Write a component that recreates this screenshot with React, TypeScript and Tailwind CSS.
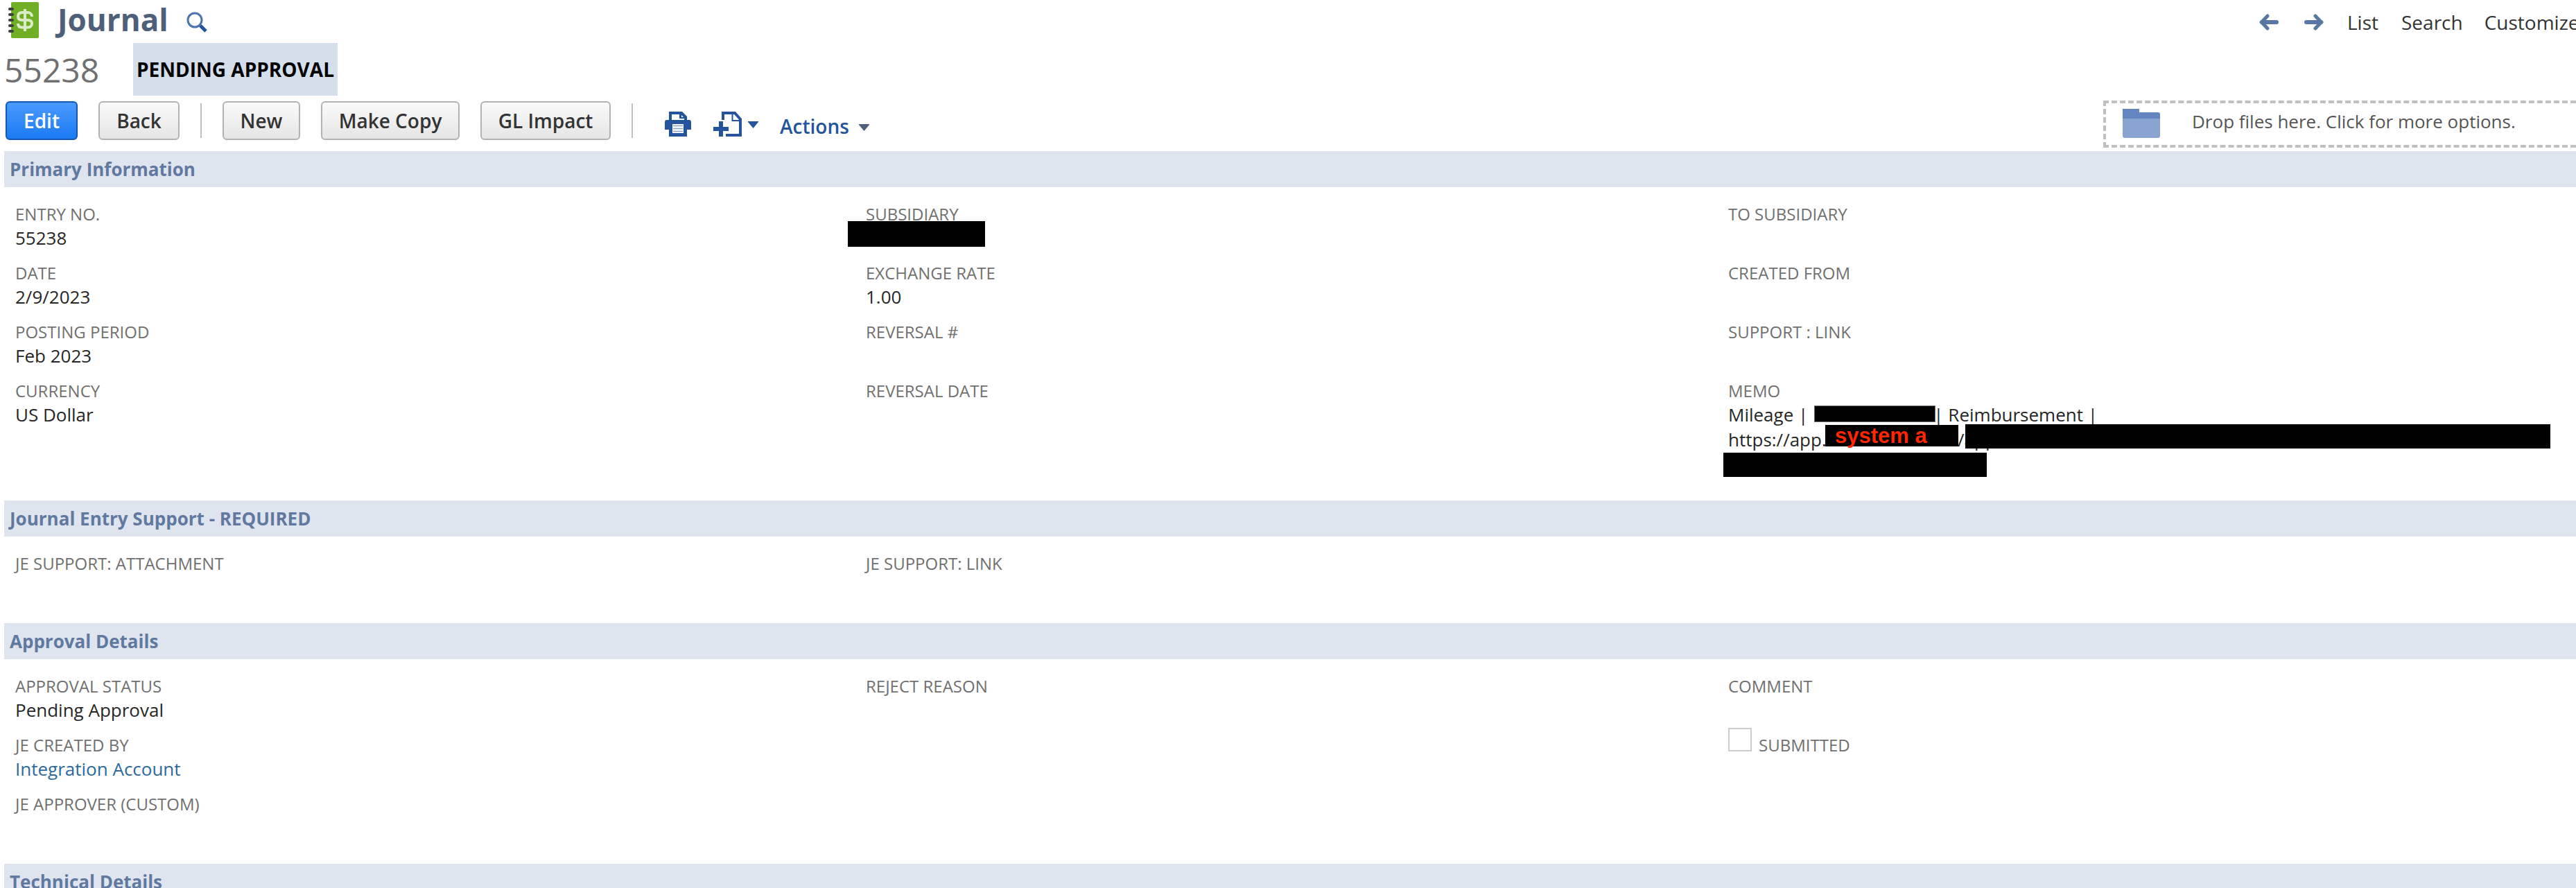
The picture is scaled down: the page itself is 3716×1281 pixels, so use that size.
import type { ReactNode } from "react";

function JournalIcon() {
  return (
    <svg className="h-[52px] w-[44px]" viewBox="0 0 44 52">
      <rect x="4" y="0" width="40" height="52" rx="2" fill="#6fae25" />
      {[10, 18, 26, 34, 42].map((y) => (
        <rect key={y} x="0" y={y - 2} width="8" height="4" rx="2" fill="#3f3f3f" />
      ))}
      <path d="M34 21c0-4-3-6-6-6h-8c-4 0-6 2-6 5.500s2 5.500 6 5.500h8c4 0 6 2 6 5s-2 5.500-6 5.500h-8c-4 0-6-2-6-5.500M24 10v32" fill="none" stroke="#dcecc8" strokeWidth="4" />
    </svg>
  );
}

function SearchIcon() {
  return (
    <svg className="h-[30px] w-[30px]" viewBox="0 0 30 30" fill="none">
      <circle cx="12" cy="12" r="10" stroke="#4a73b0" strokeWidth="3" />
      <path d="M20 20l8 8" stroke="#24549c" strokeWidth="5" />
    </svg>
  );
}

function PrintIcon() {
  return (
    <svg className="h-[36px] w-[38px]" viewBox="0 0 38 36">
      <path d="M6 13V0h19l7 7v6z" fill="#24549c" />
      <path d="M10 12V4h11v6h7v2z" fill="#fff" />
      <path d="M24 5v3h3z" fill="#fff" />
      <path d="M3 12h32q3 0 3 3v11h-6v10H6V26H0V15q0-3 3-3z" fill="#24549c" />
      <path d="M11 18h16v13H11z" fill="#fff" />
      <path d="M12 20.500h14M12 24.500h14M12 28.500h14" stroke="#86a0cb" strokeWidth="1.500" />
    </svg>
  );
}

function AddDocIcon() {
  return (
    <svg className="h-[36px] w-[41px]" viewBox="0 0 41 36" fill="none">
      <path d="M14 12V2h17l8 9v23H18" stroke="#24549c" strokeWidth="4" />
      <path d="M27.500 3v10H38" stroke="#24549c" strokeWidth="2" />
      <path d="M0 25h22M11 14v22" stroke="#24549c" strokeWidth="6" />
    </svg>
  );
}

function Caret({ className }: { className: string }) {
  return (
    <svg className={className} viewBox="0 0 15 10" fill="currentColor">
      <path d="M0 0h15v1L7.500 10 0 1z" />
    </svg>
  );
}

function Arrow({ flip }: { flip?: boolean }) {
  return (
    <svg className={flip ? "h-[26px] w-[30px] -scale-x-100" : "h-[26px] w-[30px]"} viewBox="0 0 30 26" fill="none" stroke="#5878a4">
      <path d="M5 13h21" strokeWidth="6" strokeLinecap="round" />
      <path d="M13 4L4.500 13l8.500 9" strokeWidth="5" strokeLinecap="round" />
    </svg>
  );
}

function FolderIcon() {
  return (
    <svg className="h-[42px] w-[54px]" viewBox="0 0 54 42">
      <path d="M0 0h24v5h27q3 0 3 3v10H0z" fill="#6385c0" />
      <path d="M0 14h54v25q0 3-3 3H3q-3 0-3-3z" fill="#8aa4d1" />
    </svg>
  );
}

function Section({ title, children }: { title: string; children?: ReactNode }) {
  return (
    <section>
      <h2 className="ml-[6px] h-[52px] bg-[#dfe5ef] pl-[8px] text-[26px] font-bold leading-[53px] text-[#61799f]">{title}</h2>
      {children && <div className="grid grid-cols-[1227px_1244px_1fr] pb-[34px] pl-[22px] pt-[23px]">{children}</div>}
    </section>
  );
}

function Column({ children }: { children: ReactNode }) {
  return <div className="flex flex-col gap-[17px]">{children}</div>;
}

function Field({ label, children }: { label: string; children?: ReactNode }) {
  return (
    <div className="min-h-[68px]">
      <div className="text-[24px] leading-[32px] text-[#707070]">{label}</div>
      <div className="text-[26px] leading-[36px] text-[#262626]">{children}</div>
    </div>
  );
}

function App() {
  return (
    <div className="h-[1281px] w-[3716px] overflow-hidden bg-white font-['Open_Sans',sans-serif] whitespace-nowrap">
      <header className="flex h-[62px] justify-between">
        <div className="flex pl-[12px] pt-[3px]">
          <JournalIcon />
          <h1 className="ml-[27px] -mt-[3px] text-[44px] font-bold leading-[57px] text-[#4d5f79]">Journal</h1>
          <div className="ml-[26px] mt-[14px]"><SearchIcon /></div>
        </div>
        <nav className="flex w-[458px] shrink-0 items-start pt-[13px] text-[28px] leading-[38px] text-[#333333]">
          <div className="mt-[6px] flex gap-[35px]">
            <Arrow />
            <Arrow flip />
          </div>
          <span className="ml-[33px]">List</span>
          <span className="ml-[33px]">Search</span>
          <span className="ml-[31px]">Customize</span>
        </nav>
      </header>

      <div className="flex h-[76px]">
        <span className="w-[192px] pl-[6px] text-[48px] leading-[78px] text-[#707070]">55238</span>
        <span className="w-[295px] bg-[#d5dfeb] text-center text-[28px] font-bold leading-[76px] text-black">PENDING APPROVAL</span>
      </div>

      <div className="flex h-[80px] justify-between">
        <div className="flex pl-[8px] pt-[8px] text-[28px] font-semibold leading-[52px] text-[#333333]">
          <button className="h-[56px] w-[104px] rounded-[6px] border-2 border-[#1259b5] bg-linear-to-b from-[#4a9aff] to-[#187af2] text-white">Edit</button>
          <button className="ml-[30px] h-[56px] w-[117px] rounded-[6px] border-2 border-[#b2b2b2] bg-linear-to-b from-[#fafafa] to-[#e5e5e5]">Back</button>
          <div className="mx-[30px] mt-[3px] h-[50px] w-[2px] bg-[#bfbfbf]" />
          <button className="h-[56px] w-[112px] rounded-[6px] border-2 border-[#b2b2b2] bg-linear-to-b from-[#fafafa] to-[#e5e5e5]">New</button>
          <button className="ml-[30px] h-[56px] w-[200px] rounded-[6px] border-2 border-[#b2b2b2] bg-linear-to-b from-[#fafafa] to-[#e5e5e5]">Make Copy</button>
          <button className="ml-[30px] h-[56px] w-[188px] rounded-[6px] border-2 border-[#b2b2b2] bg-linear-to-b from-[#fafafa] to-[#e5e5e5]">GL Impact</button>
          <div className="ml-[30px] mt-[3px] h-[50px] w-[2px] bg-[#bfbfbf]" />
          <div className="ml-[46px] mt-[15px]"><PrintIcon /></div>
          <div className="ml-[32px] mt-[15px] flex text-[#24549c]">
            <AddDocIcon />
            <Caret className="ml-[9px] mt-[14px] h-[10px] w-[15px]" />
          </div>
          <div className="ml-[31px] mt-[10px] flex">
            <span className="w-[107px] leading-[52px] text-[#24549c]">Actions</span>
            <Caret className="ml-[7px] mt-[23px] h-[10px] w-[15px] text-[#4d5f79]" />
          </div>
        </div>
        <div className="mt-[7px] flex h-[68px] w-[682px] shrink-0 border-4 border-r-0 border-dashed border-[#c0c0c0] pl-[24px]">
          <div className="mt-[8px]"><FolderIcon /></div>
          <span className="ml-[46px] text-[26px] leading-[53px] text-[#555555]">Drop files here. Click for more options.</span>
        </div>
      </div>

      <main>
        <Section title="Primary Information">
          <Column>
            <Field label="ENTRY NO.">55238</Field>
            <Field label="DATE">2/9/2023</Field>
            <Field label="POSTING PERIOD">Feb 2023</Field>
            <Field label="CURRENCY">US Dollar</Field>
          </Column>
          <Column>
            <Field label="SUBSIDIARY">
              <div className="-ml-[26px] -mt-[6px] h-[37px] w-[198px] bg-black" />
            </Field>
            <Field label="EXCHANGE RATE">1.00</Field>
            <Field label="REVERSAL #" />
            <Field label="REVERSAL DATE" />
          </Column>
          <Column>
            <Field label="TO SUBSIDIARY" />
            <Field label="CREATED FROM" />
            <Field label="SUPPORT : LINK" />
            <Field label="MEMO">
              <div className="flex h-[36px]">
                Mileage |
                <span className="ml-[9px] mt-[5px] h-[24px] w-[175px] border border-[#6b6b6b] bg-black" />
                <span className="-ml-[3px]">| Reimbursement |</span>
              </div>
              <div className="relative h-[36px]">
                <span>https://app.</span>
                <span className="absolute left-[331px] top-0">/app</span>
                {/* redaction bars sit on top of the link */}
                <span className="absolute left-[140px] top-[-3px] h-[31px] w-[192px] bg-black pl-[14px] font-['Liberation_Sans',sans-serif] text-[31px] font-bold leading-[32px] text-[#ff2600]">system a</span>
                <span className="absolute left-[342px] top-[-4px] h-[35px] w-[844px] bg-black" />
              </div>
              <div className="h-[36px]">
                <div className="relative -left-[7px] top-px h-[35px] w-[380px] bg-black" />
              </div>
            </Field>
          </Column>
        </Section>

        <Section title="Journal Entry Support - REQUIRED">
          <Column><Field label="JE SUPPORT: ATTACHMENT" /></Column>
          <Column><Field label="JE SUPPORT: LINK" /></Column>
        </Section>

        <Section title="Approval Details">
          <Column>
            <Field label="APPROVAL STATUS">Pending Approval</Field>
            <Field label="JE CREATED BY">
              <a href="#" className="text-[#2d689e]">Integration Account</a>
            </Field>
            <Field label="JE APPROVER (CUSTOM)" />
          </Column>
          <Column><Field label="REJECT REASON" /></Column>
          <Column>
            <Field label="COMMENT" />
            <div className="flex h-[68px]">
              <span className="-mt-[9px] h-[34px] w-[34px] border-2 border-[#cccccc] bg-white" />
              <span className="ml-[10px] text-[24px] leading-[32px] text-[#707070]">SUBMITTED</span>
            </div>
          </Column>
        </Section>

        <Section title="Technical Details" />
      </main>
    </div>
  );
}

export default App;
